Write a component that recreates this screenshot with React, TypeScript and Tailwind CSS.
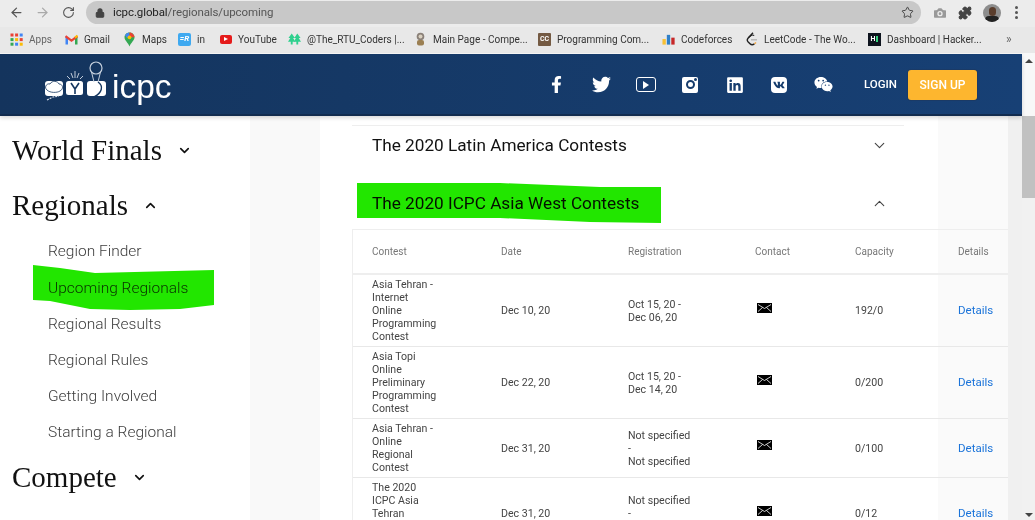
import React from "react";
import { FaFacebookF, FaTwitter, FaLinkedin, FaVk, FaWeixin } from "react-icons/fa";
import { ArrowLeft, ArrowRight, RotateCw, Lock, Star, Camera, Puzzle, ChevronDown, ChevronUp } from "lucide-react";

const Apps = () => (
  <svg width="13" height="13" viewBox="0 0 13 13">
    {[0, 1, 2].map((r) =>
      [0, 1, 2].map((c) => (
        <rect key={`${r}${c}`} x={c * 4.6 + 0.5} y={r * 4.6 + 0.5} width="3" height="3"
          fill={[["#ea4335", "#ea4335", "#4285f4"], ["#34a853", "#fbbc05", "#ea4335"], ["#34a853", "#4285f4", "#fbbc05"]][r][c]} />
      ))
    )}
  </svg>
);
const Gmail = () => (
  <svg width="13" height="11" viewBox="0 0 13 11">
    <path d="M0.5 10.5V2L3 3.5V10.5Z" fill="#4285f4" />
    <path d="M10 10.5V3.5L12.5 2V10.5Z" fill="#34a853" />
    <path d="M0.5 2.2L6.5 6.6L12.5 2.2" fill="none" stroke="#ea4335" strokeWidth="2.2" />
    <path d="M10 3.6L12.5 1.6" stroke="#fbbc05" strokeWidth="2" />
  </svg>
);
const Maps = () => (
  <svg width="11" height="15" viewBox="0 0 11 15">
    <path d="M5.5 0.5C2.5 0.5 0.5 2.7 0.5 5.3C0.5 8.5 4 10.5 5.5 14.5C7 10.5 10.5 8.5 10.5 5.3C10.5 2.7 8.5 0.5 5.5 0.5Z" fill="#34a853" />
    <path d="M1 3.2A5 5 0 0 1 5.5 0.5L5.5 3.5L3 6Z" fill="#4285f4" />
    <path d="M5.5 0.5A5 5 0 0 1 10.5 5.3L7.5 5.3L5.5 3.5Z" fill="#ea4335" />
    <circle cx="5.5" cy="5.3" r="1.9" fill="#fbbc05" />
  </svg>
);
const RBox = () => (
  <div className="w-[13px] h-[13px] rounded-[2px] bg-[#3fa9f0] flex items-center justify-center text-white text-[8px] font-bold italic leading-none">
    =R
  </div>
);
const YT = () => (
  <div className="w-[12px] h-[9px] rounded-[2px] bg-[#e51b1b] flex items-center justify-center">
    <div className="w-0 h-0 border-y-[2px] border-y-transparent border-l-[4px] border-l-white" />
  </div>
);
const Tree = () => (
  <svg width="14" height="12" viewBox="0 0 14 12" fill="#2fd08e">
    <path d="M4 0L7.5 5H5.5L8 9H5V12H3V9H0L2.5 5H0.5Z" />
    <path d="M10 0L13.5 5H11.5L14 9H11V12H9V9H6.5L8.5 5H6.8Z" />
  </svg>
);
const Wiki = () => (
  <svg width="13" height="14" viewBox="0 0 13 14">
    <circle cx="6.5" cy="4.5" r="3.8" fill="#8a8078" />
    <circle cx="6.5" cy="4.5" r="2" fill="#d9d0c0" />
    <rect x="3" y="8" width="7" height="5.5" rx="2" fill="#9b7f52" />
  </svg>
);
const CC = () => (
  <div className="w-[13px] h-[13px] rounded-[1px] bg-[#745a43] flex items-center justify-center text-white text-[7px] font-bold leading-none">
    CC
  </div>
);
const CF = () => (
  <svg width="14" height="11" viewBox="0 0 14 11">
    <rect x="0.5" y="5" width="3.6" height="6" fill="#f7c035" />
    <rect x="5.2" y="0.5" width="3.6" height="10.5" fill="#2f80c8" />
    <rect x="10" y="3.5" width="3.6" height="7.5" fill="#c62828" />
  </svg>
);
const LC = () => (
  <svg width="12" height="14" viewBox="0 0 12 14" fill="none">
    <path d="M7 0.8L2 6.2C1 7.4 1 8.6 2 9.8L4 11.8C5.2 13 7 13 8.5 11.8" stroke="#222" strokeWidth="1.4" />
    <path d="M2.8 5.3L5 3.5C6 2.8 7 2.8 8.2 3.5" stroke="#222" strokeWidth="1.2" />
    <path d="M5 7.8H11" stroke="#b0b0b0" strokeWidth="1.3" />
    <path d="M8.5 11.8L10 10.4" stroke="#f2a33a" strokeWidth="1.4" />
  </svg>
);
const HR = () => (
  <div className="w-[13px] h-[13px] bg-[#0e141e] flex items-center justify-center gap-[1px]">
    <span className="text-white text-[7px] font-bold leading-none">H</span>
    <span className="w-[2px] h-[6px] bg-[#39d27f]" />
  </div>
);

const bookmarks: [React.ReactNode, string, string][] = [
  [<Apps />, "Apps", "w-[55px]"],
  [<Gmail />, "Gmail", "w-[58px]"],
  [<Maps />, "Maps", "w-[55px]"],
  [<RBox />, "in", "w-[41px]"],
  [<YT />, "YouTube", "w-[69px]"],
  [<Tree />, "@The_RTU_Coders |...", "w-[126px]"],
  [<Wiki />, "Main Page - Compe...", "w-[124px]"],
  [<CC />, "Programming Com...", "w-[124px]"],
  [<CF />, "Codeforces", "w-[83px]"],
  [<LC />, "LeetCode - The Wo...", "w-[123px]"],
  [<HR />, "Dashboard | Hacker...", "w-[120px]"],
];

const Mail = () => (
  <svg width="15" height="10" viewBox="0 0 15 10" className="block">
    <rect width="15" height="10" fill="#000" />
    <path d="M1 1.5L7.5 5.5L14 1.5M1 8.5L5.5 4.5M14 8.5L9.5 4.5" fill="none" stroke="#fff" strokeWidth="0.8" />
  </svg>
);

const Logo = () => (
  <svg width="64" height="46" viewBox="0 0 64 46" className="block mb-[12px] ml-[1px]">
    <rect x="1" y="26" width="18" height="15" rx="3" fill="#fff" />
    <path d="M3 35C0 33 2 28 6 29C8 25 14 26 15 29C19 29 20 34 16 36C13 38 6 38 3 35Z" fill="#fff" stroke="#14365f" strokeWidth="0.8" />
    <path d="M3 45L9 42L15 41" stroke="#d5dce6" strokeWidth="1.2" strokeDasharray="2 1" fill="none" />
    <rect x="22" y="26" width="17" height="14" rx="2.5" fill="#fff" />
    <path d="M27 28L31 34L35 28M31 34V39" stroke="#14365f" strokeWidth="1.6" fill="none" />
    <path d="M23 21L26 24M27 18L29 23M31 16V23M35 18L33 23M39 21L36 24" stroke="#d5dce6" strokeWidth="0.9" />
    <rect x="43" y="26" width="19" height="15" rx="3" fill="#fff" />
    <circle cx="52" cy="13" r="6" fill="none" stroke="#c7d1de" strokeWidth="1.2" />
    <path d="M47.5 17L50 27M56.5 17L54 27" stroke="#c7d1de" strokeWidth="1" />
    <path d="M54 27C60 31 58 38 50 42" stroke="#14365f" strokeWidth="1.4" fill="none" />
  </svg>
);

const rows: { c: string[]; d: string; r: string[]; n: string; h: string }[] = [
  { c: ["Asia Tehran -", "Internet", "Online", "Programming", "Contest"], d: "Dec 10, 20", r: ["Oct 15, 20 -", "Dec 06, 20"], n: "192/0", h: "h-[72px]" },
  { c: ["Asia Topi", "Online", "Preliminary", "Programming", "Contest"], d: "Dec 22, 20", r: ["Oct 15, 20 -", "Dec 14, 20"], n: "0/200", h: "h-[72px]" },
  { c: ["Asia Tehran -", "Online", "Regional", "Contest"], d: "Dec 31, 20", r: ["Not specified", "-", "Not specified"], n: "0/100", h: "h-[59px]" },
  { c: ["The 2020", "ICPC Asia", "Tehran", "Regional", "Contest"], d: "Dec 31, 20", r: ["Not specified", "-", "Not specified"], n: "0/12", h: "h-[72px]" },
];

const grid = "grid grid-cols-[128px_127px_127px_100px_103px_70px] items-center";

const SideHead = ({ label, open }: { label: string; open?: boolean }) => (
  <div className="h-[55px] pl-[12px] flex items-center gap-[15px] text-[#111] text-[29px] font-['Liberation_Serif',serif]">
    {label}
    {open ? <ChevronUp size={15} strokeWidth={2.6} /> : <ChevronDown size={15} strokeWidth={2.6} />}
  </div>
);

const SideItem = ({ label }: { label: string }) => (
  <div className="h-[36.2px] pl-[48px] flex items-center text-[15.5px] font-light text-[#3c3c3c]">{label}</div>
);

const Social = ({ children }: { children: React.ReactNode }) => (
  <div className="w-[44.5px] flex items-center justify-center text-white">{children}</div>
);

export default function App() {
  return (
    <div className="relative h-[520px] w-[1035px] overflow-hidden bg-white font-['Roboto',sans-serif]">
      {/* browser chrome */}
      <div className="h-[27px] bg-[#ececec] flex items-center text-[#5f6368] pl-[9px] pb-[2px]">
        <ArrowLeft size={15} strokeWidth={2} className="text-[#555]" />
        <ArrowRight size={15} strokeWidth={2} className="ml-[11px] text-[#aaa]" />
        <RotateCw size={13} strokeWidth={2} className="ml-[12px] text-[#555]" />
        <div className="ml-[11px] w-[835px] h-[23px] rounded-full bg-[#c8c8c8] flex items-center pl-[9px] pr-[7px]">
          <Lock size={10} strokeWidth={2.5} className="text-[#444]" fill="#444" />
          <span className="ml-[8px] text-[11.5px] tracking-[-0.1px] text-[#555]">
            <span className="text-[#222]">icpc.global</span>/regionals/upcoming
          </span>
          <Star size={13} strokeWidth={1.8} className="ml-auto text-[#444]" />
        </div>
        <Camera size={16} className="ml-[11px] text-[#999]" fill="#999" stroke="#ececec" />
        <Puzzle size={14} className="ml-[10px] text-[#444]" fill="#444" />
        <div className="ml-[11px] w-[18px] h-[18px] rounded-full bg-[#8d8d8d] overflow-hidden flex flex-col items-center justify-end">
          <div className="w-[7px] h-[9px] rounded-full bg-[#5a3d2c]" />
          <div className="w-[14px] h-[6px] rounded-t-[4px] bg-[#222]" />
        </div>
        <div className="ml-[14px] flex flex-col gap-[2px]">
          <span className="w-[3px] h-[3px] rounded-full bg-[#555]" />
          <span className="w-[3px] h-[3px] rounded-full bg-[#555]" />
          <span className="w-[3px] h-[3px] rounded-full bg-[#555]" />
        </div>
      </div>
      <div className="h-[27px] bg-[#e8e8e8] flex items-center pl-[10px] pb-[2px] text-[10px] text-[#333] whitespace-nowrap border-b border-[#f8f8f8]">
        {bookmarks.map(([icon, label, w]) => (
          <div key={label} className={`flex items-center gap-[6px] ${w}`}>
            <div className="w-[13px] flex justify-center">{icon}</div>
            <span className={label === "Apps" ? "text-[#666]" : ""}>{label}</span>
          </div>
        ))}
        <span className="ml-[18px] text-[#666] text-[12px]">»</span>
      </div>

      <div className="flex h-[466px]">
        <div className="w-[1022px] flex flex-col">
          {/* site header */}
          <div className="h-[62px] shrink-0 bg-gradient-to-r from-[#14345d] to-[#174075] border-b-2 border-[#122c4f] flex items-center pl-[43px] pr-[45px] z-10 shadow-[0_2px_4px_rgba(0,0,0,0.15)]">
            <Logo />
            <span className="ml-[4px] text-[33.5px] leading-none font-['Liberation_Sans',sans-serif] text-white pt-[6px]">icpc</span>
            <div className="ml-auto flex items-center pt-[1px]">
              <Social><FaFacebookF size={17} /></Social>
              <Social><FaTwitter size={19} /></Social>
              <Social>
                <div className="w-[20px] h-[15px] rounded-[3px] border-[1.5px] border-white flex items-center justify-center">
                  <div className="w-0 h-0 border-y-[4px] border-y-transparent border-l-[6px] border-l-white" />
                </div>
              </Social>
              <Social>
                <div className="w-[16px] h-[16px] rounded-[2px] bg-white flex items-center justify-center relative">
                  <div className="w-[9px] h-[9px] rounded-full border-[2px] border-[#163c6c]" />
                  <div className="absolute right-[1px] top-[1px] w-[3px] h-[3px] rounded-full bg-[#163c6c]" />
                </div>
              </Social>
              <Social><FaLinkedin size={18} /></Social>
              <Social>
                <div className="w-[16px] h-[16px] rounded-[4px] bg-white flex items-center justify-center text-[#163c6c]">
                  <FaVk size={12} />
                </div>
              </Social>
              <Social><FaWeixin size={19} /></Social>
              <span className="ml-[18px] text-white text-[11.5px] font-medium">LOGIN</span>
              <div className="ml-[11px] w-[69px] h-[30px] rounded-[3px] bg-[#fdb62f] text-white text-[12px] font-medium flex items-center justify-center shadow-[0_0_0_1px_#1a3a66]">
                SIGN UP
              </div>
            </div>
          </div>

          <div className="flex flex-1 min-h-0">
            {/* sidebar */}
            <div className="w-[250px] pt-[7px] bg-white">
              <SideHead label="World Finals" />
              <SideHead label="Regionals" open />
              <div className="mt-[1px] -mb-[1px]">
                <SideItem label="Region Finder" />
                <SideItem label="Upcoming Regionals" />
                <SideItem label="Regional Results" />
                <SideItem label="Regional Rules" />
                <SideItem label="Getting Involved" />
                <SideItem label="Starting a Regional" />
              </div>
              <SideHead label="Compete" />
            </div>
            <div className="w-[70px] bg-[#f9f9f9]" />

            {/* main */}
            <div className="w-[688px] flex flex-col bg-white text-[10.6px] leading-[13px] text-[#444]">
              <div className="flex h-[113px] shrink-0">
                <div className="w-[618px] pl-[32px] pt-[9px]">
                  <div className="w-[552px] border-t border-[#eeeeee]">
                    <div className="h-[38px] pl-[20px] pr-[16px] flex items-center justify-between text-[17.2px] text-[#111]">
                      The 2020 Latin America Contests
                      <ChevronDown size={17} strokeWidth={1.6} className="text-[#444]" />
                    </div>
                    <div className="mt-[20px] h-[38px] pl-[20px] pr-[16px] flex items-center justify-between text-[17.2px] text-[#111]">
                      The 2020 ICPC Asia West Contests
                      <ChevronUp size={17} strokeWidth={1.6} className="text-[#444]" />
                    </div>
                  </div>
                </div>
                <div className="w-[70px] bg-[#fafafa]" />
              </div>

              <div className="ml-[32px] w-[656px] border-t border-l border-[#eeeeee]">
                <div className={`${grid} h-[45px] border-b-2 border-[#eeeeee] text-[10px] text-[#777]`}>
                  <div className="pl-[19px]">Contest</div>
                  <div className="pl-[20px]">Date</div>
                  <div className="pl-[20px]">Registration</div>
                  <div className="pl-[20px]">Contact</div>
                  <div className="pl-[20px]">Capacity</div>
                  <div className="pl-[20px] h-full flex items-center bg-[#fafafa]">Details</div>
                </div>
                {rows.map((row) => (
                  <div key={row.c.join() + row.d} className={`${grid} ${row.h} shrink-0 border-b border-[#e8e8e8]`}>
                    <div className="pl-[19px]">
                      {row.c.map((l) => (
                        <div key={l}>{l}</div>
                      ))}
                    </div>
                    <div className="pl-[20px]">{row.d}</div>
                    <div className="pl-[20px]">
                      {row.r.map((l, i) => (
                        <div key={i}>{l}</div>
                      ))}
                    </div>
                    <div className="pl-[22px] -mt-[6px]">
                      <Mail />
                    </div>
                    <div className="pl-[20px]">{row.n}</div>
                    <div className="pl-[20px] h-full flex items-center bg-[#fafafa] text-[#1a73d9] text-[11.5px]">Details</div>
                  </div>
                ))}
              </div>
            </div>
            <div className="flex-1 bg-[#f0f0f0]" />
          </div>
        </div>

        {/* scrollbar */}
        <div className="w-[13px] bg-[#f1f1f1] flex flex-col items-center relative">
          <div className="h-[62px] w-full bg-[#f8f8f8] flex justify-center pt-[5px]">
            <div className="w-0 h-0 border-x-[4px] border-x-transparent border-b-[4px] border-b-[#444]" />
          </div>
          <div className="h-[82px] w-full bg-[#c1c1c1]" />
          <div className="mt-auto mb-[3px] w-0 h-0 border-x-[4px] border-x-transparent border-t-[4px] border-t-[#444]" />
        </div>
      </div>

      {/* marker highlights drawn over the page */}
      <svg className="absolute left-0 top-0 mix-blend-multiply pointer-events-none" width="1035" height="520" viewBox="0 0 1035 520">
        <path d="M33 265L60 268L95 273L214 270L214 305L180 309L130 310L90 309L50 301L33 300Z" fill="#22e600" />
        <path d="M357 183L500 183L600 187L661 187L661 223L590 222L500 218L357 218Z" fill="#22e600" />
      </svg>
    </div>
  );
}
